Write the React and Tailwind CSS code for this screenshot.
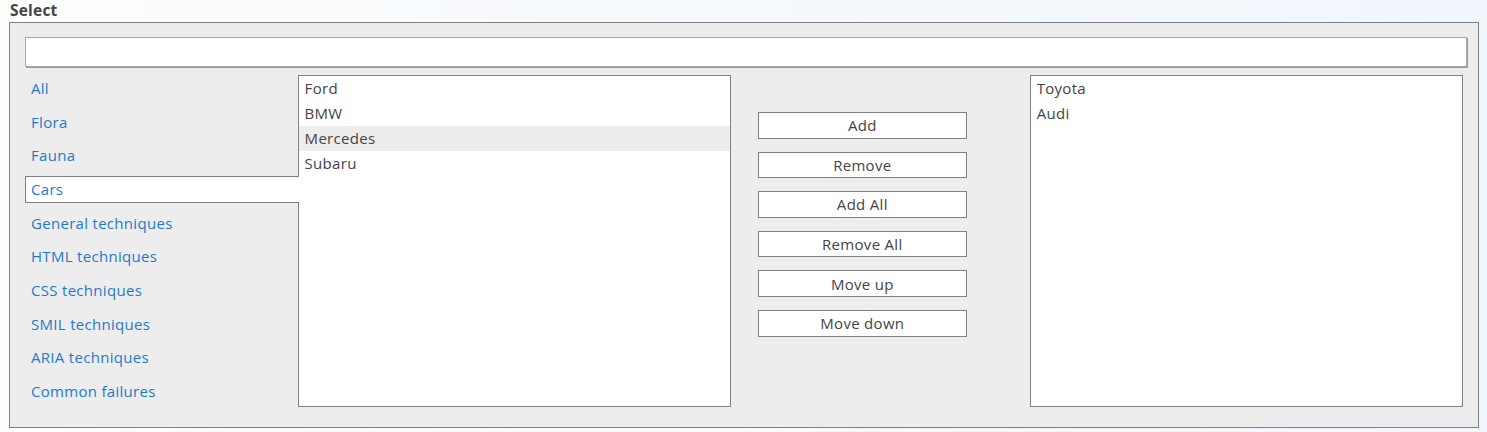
import React from 'react';

const categories = [
  'All',
  'Flora',
  'Fauna',
  'Cars',
  'General techniques',
  'HTML techniques',
  'CSS techniques',
  'SMIL techniques',
  'ARIA techniques',
  'Common failures',
];

const available = ['Ford', 'BMW', 'Mercedes', 'Subaru'];
const selected = ['Toyota', 'Audi'];
const actions = ['Add', 'Remove', 'Add All', 'Remove All', 'Move up', 'Move down'];

export default function App() {
  return (
    <div
      className="min-h-[432px] bg-gradient-to-r from-[#fcfdfe] to-[#f0f6fc] pl-[9px] pr-[8px] text-[15px] tracking-[0.3px] text-[#444]"
      style={{ fontFamily: '"Open Sans", "Liberation Sans", sans-serif' }}
    >
      <h2 className="h-[22px] pl-[1px] text-[15.5px] font-bold leading-[20px] tracking-[0.2px] text-[#444]">Select</h2>
      <div className="h-[406px] border border-[#808080] bg-[#ededed] px-[15px] pt-[14px]">
        <input
          type="text"
          className="block h-[30px] w-[1442px] border border-[#a7a7ad] bg-white shadow-[1px_1px_0_#9a9a9a] outline-none"
        />
        <div className="mt-[8px] flex">
          <ul className="flex w-[273px] flex-col gap-[6.67px]">
            {categories.map((c) => (
              <li
                key={c}
                className={
                  'relative z-10 h-[27px] pl-[5px] leading-[25px] text-[#1f7acb] ' +
                  (c === 'Cars'
                    ? 'mr-[-1px] border border-r-0 border-[#808080] bg-white'
                    : 'border border-transparent')
                }
              >
                {c}
              </li>
            ))}
          </ul>
          <ul className="h-[332px] w-[434px] border border-[#808080] bg-white">
            {available.map((item) => (
              <li
                key={item}
                className={
                  'h-[25px] pl-[6px] leading-[25px] ' + (item === 'Mercedes' ? 'bg-[#ededed]' : '')
                }
              >
                {item}
              </li>
            ))}
          </ul>
          <div className="ml-[27px] mt-[37px] flex w-[209px] flex-col gap-[13px]">
            {actions.map((a) => (
              <button
                key={a}
                className="h-[26.6px] border border-[#808080] bg-white text-center leading-[24px] tracking-[0.3px] text-[#444]"
              >
                {a}
              </button>
            ))}
          </div>
          <ul className="ml-[63px] h-[332px] w-[434px] border border-[#808080] bg-white">
            {selected.map((item) => (
              <li key={item} className="h-[25px] pl-[6px] leading-[25px]">
                {item}
              </li>
            ))}
          </ul>
        </div>
      </div>
    </div>
  );
}
